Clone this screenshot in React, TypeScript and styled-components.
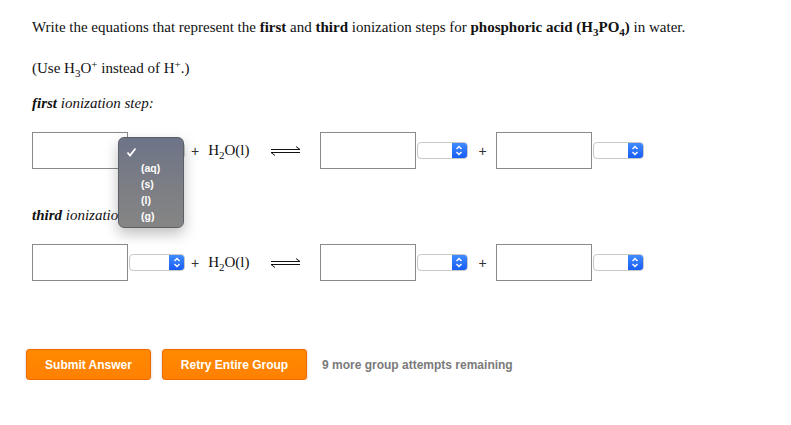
import React from 'react';
import styled, { createGlobalStyle } from 'styled-components';

const GlobalStyle = createGlobalStyle`
  body {
    margin: 0;
    background: #fff;
    font-family: "Liberation Serif", "Times New Roman", serif;
    color: #111;
  }
`;

const Page = styled.div`
  padding: 18px 0 0 32px;
  font-size: 15px;
`;

const Para = styled.p<{ $top?: number }>`
  margin: ${(p) => p.$top ?? 0}px 0 0 0;
  line-height: 18px;
`;

const StepLabel = styled.p<{ $top: number }>`
  margin: ${(p) => p.$top}px 0 0 0;
  font-style: italic;
  line-height: 18px;
`;

const Row = styled.div<{ $top: number }>`
  display: flex;
  align-items: center;
  margin-top: ${(p) => p.$top}px;
  height: 37px;
`;

const AnswerBox = styled.div`
  width: 94px;
  height: 35px;
  border: 1px solid #8a8a8a;
  background: #fff;
`;

const SelectWrap = styled.div`
  position: relative;
  margin-left: 1px;
`;

const Select = styled.div<{ $w: number }>`
  width: ${(p) => p.$w}px;
  height: 17px;
  border: 1px solid #c8c8c8;
  border-radius: 4px;
  background: #fff;
  display: flex;
  justify-content: flex-end;
  overflow: hidden;
  box-sizing: border-box;
`;

const SelectKnob = styled.div`
  width: 15px;
  height: 100%;
  background: linear-gradient(#3f8cff, #1a5cf5);
  display: flex;
  align-items: center;
  justify-content: center;
`;

const Plus = styled.span<{ $l: number; $r: number }>`
  margin: 0 ${(p) => p.$r}px 0 ${(p) => p.$l}px;
  font-family: "Liberation Sans", Arial, sans-serif;
  font-size: 14px;
  color: #333;
`;

const Water = styled.span`
  font-size: 15px;
`;

const Arrow = styled.svg`
  margin: 0 19px 0 20px;
`;

const Menu = styled.div`
  position: absolute;
  left: -11px;
  top: -5px;
  width: 66px;
  height: 91px;
  box-sizing: border-box;
  border: 1px solid #5c5f66;
  border-radius: 6px;
  background: linear-gradient(#6d7488, #7c7e84 55%, #858585);
  box-shadow: 0 6px 14px rgba(0, 0, 0, 0.25);
  padding: 5px 0 0 7px;
  font-family: "Liberation Sans", Arial, sans-serif;
  font-weight: bold;
  font-size: 10.5px;
  color: #fff;
  z-index: 2;
`;

const MenuItem = styled.div`
  height: 16px;
  line-height: 16px;
  padding-left: 15px;
`;

const Check = styled.div`
  height: 17px;
  display: flex;
  align-items: center;
`;

const Actions = styled.div`
  display: flex;
  align-items: center;
  margin: 68px 0 0 -6px;
  font-family: "Liberation Sans", Arial, sans-serif;
`;

const OrangeButton = styled.button<{ $w: number }>`
  width: ${(p) => p.$w}px;
  height: 31px;
  margin-right: 11px;
  border: 1px solid #f06a00;
  border-radius: 3px;
  background: linear-gradient(#ff8a00, #ff8000);
  box-shadow: 0 1px 3px rgba(0, 0, 0, 0.2);
  color: #fff;
  font-family: "Liberation Sans", Arial, sans-serif;
  font-weight: bold;
  font-size: 12px;
  padding: 0;
`;

const Remaining = styled.span`
  margin-left: 4px;
  font-size: 12px;
  font-weight: bold;
  color: #7a7a7a;
`;

const Sub = styled.sub`
  font-size: 11px;
  line-height: 0;
  vertical-align: -4px;
`;

const Sup = styled.sup`
  font-size: 11px;
  line-height: 0;
  vertical-align: 5px;
`;

const Chevrons = () => (
  <svg width="8" height="11" viewBox="0 0 8 11">
    <path d="M1.5 4 L4 1.5 L6.5 4 M1.5 7 L4 9.5 L6.5 7" fill="none" stroke="#fff" strokeWidth="1.4" />
  </svg>
);

const StateSelect = ({ w }: { w: number }) => (
  <Select $w={w}>
    <SelectKnob>
      <Chevrons />
    </SelectKnob>
  </Select>
);

const Equilibrium = () => (
  <Arrow width="31" height="10" viewBox="0 0 31 10">
    <path d="M1 3.5 H30 M30 3.5 L26 0.5" fill="none" stroke="#111" strokeWidth="1" />
    <path d="M30 6.5 H1 M1 6.5 L5 9.5" fill="none" stroke="#111" strokeWidth="1" />
  </Arrow>
);

const WaterTerm = () => (
  <Water>
    H<Sub>2</Sub>O(l)
  </Water>
);

const StateMenu = () => (
  <Menu>
    <Check>
      <svg width="11" height="10" viewBox="0 0 11 10">
        <path d="M1.5 5.5 L4 8.5 L9.5 1.5" fill="none" stroke="#fff" strokeWidth="1.8" />
      </svg>
    </Check>
    <MenuItem>(aq)</MenuItem>
    <MenuItem>(s)</MenuItem>
    <MenuItem>(l)</MenuItem>
    <MenuItem>(g)</MenuItem>
  </Menu>
);

const EquationRow = ({ top, open }: { top: number; open?: boolean }) => (
  <Row $top={top}>
    <AnswerBox />
    <SelectWrap>
      <StateSelect w={56} />
      {open && <StateMenu />}
    </SelectWrap>
    <Plus $l={6} $r={9}>+</Plus>
    <WaterTerm />
    <Equilibrium />
    <AnswerBox />
    <SelectWrap>
      <StateSelect w={51} />
    </SelectWrap>
    <Plus $l={11} $r={9}>+</Plus>
    <AnswerBox />
    <SelectWrap>
      <StateSelect w={51} />
    </SelectWrap>
  </Row>
);

export default function App() {
  return (
    <>
      <GlobalStyle />
      <Page>
        <Para>
          Write the equations that represent the <b>first</b> and <b>third</b> ionization steps for{' '}
          <b>
            phosphoric acid (H<Sub>3</Sub>PO<Sub>4</Sub>)
          </b>{' '}
          in water.
        </Para>
        <Para $top={23}>
          (Use H<Sub>3</Sub>O<Sup>+</Sup> instead of H<Sup>+</Sup>.)
        </Para>
        <StepLabel $top={17}>
          <b>first</b> ionization step:
        </StepLabel>
        <EquationRow top={20} open />
        <StepLabel $top={37}>
          <b>third</b> ionization step:
        </StepLabel>
        <EquationRow top={20} />
        <Actions>
          <OrangeButton $w={125}>Submit Answer</OrangeButton>
          <OrangeButton $w={145}>Retry Entire Group</OrangeButton>
          <Remaining>9 more group attempts remaining</Remaining>
        </Actions>
      </Page>
    </>
  );
}
